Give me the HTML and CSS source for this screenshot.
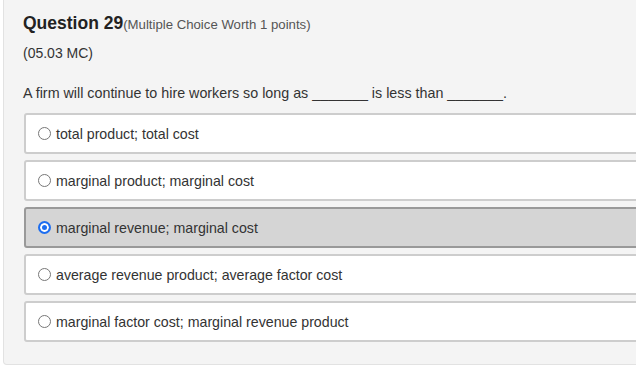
FILE: index.html
```html
<!DOCTYPE html>
<html lang="en">
<head>
    <meta charset="UTF-8">
    <meta name="viewport" content="width=device-width, initial-scale=1.0">
    <title>Question 29</title>
    <link rel="stylesheet" href="styles.css">
</head>
<body>
    <div class="question-panel">
        <h2 class="question-title">Question 29<span class="worth">(Multiple Choice Worth 1 points)</span></h2>
        <p class="code">(05.03 MC)</p>
        <p class="prompt">A firm will continue to hire workers so long as _______ is less than _______.</p>
        <ul class="choices">
            <li class="choice"><label><input type="radio" name="q29"> total product; total cost</label></li>
            <li class="choice"><label><input type="radio" name="q29"> marginal product; marginal cost</label></li>
            <li class="choice selected"><label><input type="radio" name="q29" checked> marginal revenue; marginal cost</label></li>
            <li class="choice"><label><input type="radio" name="q29"> average revenue product; average factor cost</label></li>
            <li class="choice"><label><input type="radio" name="q29"> marginal factor cost; marginal revenue product</label></li>
        </ul>
    </div>
</body>
</html>
```

FILE: styles.css
```css
body {
    margin: 0;
    padding: 0;
    background: white;
    color: #333;
    font-family: "Liberation Sans", Arial, sans-serif;
    overflow: hidden;
}
.question-panel {
    margin-left: 3px;
    width: 700px;
    height: 365px;
    box-sizing: border-box;
    padding: 13px 0 0 19px;
    background: #f4f4f4;
    border: 1px solid #e2e2e2;
    border-top: none;
    border-radius: 0 0 4px 4px;
}
.question-title {
    margin: 0;
    font-size: 17.5px;
    line-height: 20px;
    color: #222;
}
.worth {
    font-size: 13.2px;
    font-weight: normal;
    color: #555;
}
.code {
    margin: 10px 0 0;
    font-size: 14px;
    line-height: 16px;
}
.prompt {
    margin: 24px 0 0;
    font-size: 14.3px;
    line-height: 16px;
}
.choices {
    list-style: none;
    margin: 12px 0 0 1px;
    padding: 0;
}
.choice {
    height: 41px;
    margin-bottom: 6px;
    box-sizing: border-box;
    background: white;
    border: 2px solid #cdcdcd;
    border-radius: 3px;
    font-size: 14.2px;
    display: flex;
    align-items: center;
    padding-left: 12px;
}
.choice.selected {
    background: #d5d5d5;
    border-color: #999;
}
.choice label {
    display: flex;
    align-items: center;
    gap: 5px;
}
.choice input[type="radio"] {
    appearance: none;
    margin: 0;
    width: 13px;
    height: 13px;
    border: 1px solid #777;
    border-radius: 50%;
    background: white;
}
.choice input[type="radio"]:checked {
    border: 2px solid #1d6ef0;
    background: #1d6ef0;
    box-shadow: inset 0 0 0 2px white;
}
```
